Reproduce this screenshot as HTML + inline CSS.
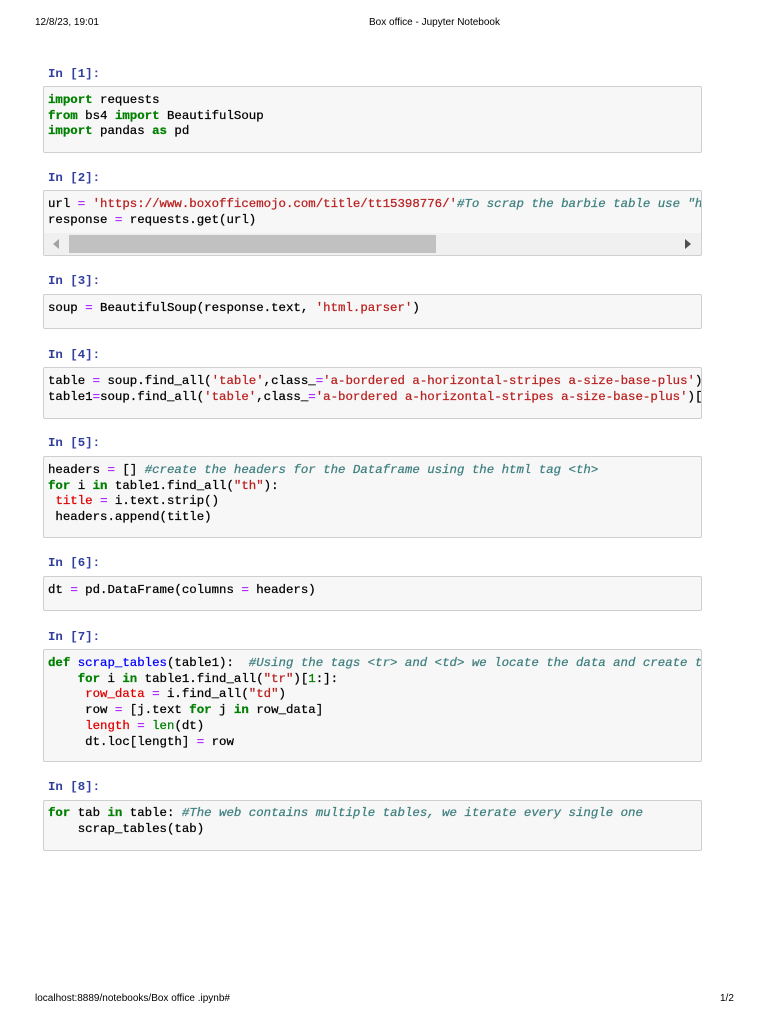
<!DOCTYPE html>
<html><head><meta charset="utf-8"><style>
body{margin:0;width:768px;height:1024px;background:#fff;position:relative;overflow:hidden;font-family:"Liberation Sans",sans-serif}
.hd{position:absolute;font-size:10px;color:#000}
.lbl{position:absolute;left:48px;font-family:"Liberation Mono",monospace;font-size:12.4px;color:#303F9F;font-weight:bold}
.box{position:absolute;left:43px;width:657px;border:1px solid #cfcfcf;background:#f7f7f7;overflow:hidden;border-radius:2px}
pre{margin:0;position:absolute;left:4px;font-family:"Liberation Mono",monospace;font-size:12.4px;line-height:15.7px;color:#000;white-space:pre;-webkit-text-stroke:0.25px currentColor}
.k{color:#008000;font-weight:bold}.s{color:#BA2121}.c{color:#408080;font-style:italic}.o{color:#AA22FF}.r{color:#e00000}.f{color:#0000FF}.n{color:#008000}.b{color:#008000}
</style></head><body>
<div class="hd" style="left:35px;top:17px">12/8/23, 19:01</div>
<div class="hd" style="left:369px;top:17px">Box office - Jupyter Notebook</div>
<div class="hd" style="left:35px;top:993px">localhost:8889/notebooks/Box office .ipynb#</div>
<div class="hd" style="left:720px;top:993px">1/2</div>

<div class="lbl" style="top:67px">In [1]:</div>
<div class="box" style="top:86px;height:65px"><pre style="top:6px"><span class="k">import</span> requests
<span class="k">from</span> bs4 <span class="k">import</span> BeautifulSoup
<span class="k">import</span> pandas <span class="k">as</span> pd</pre></div>

<div class="lbl" style="top:171px">In [2]:</div>
<div class="box" style="top:190px;height:64px"><pre style="top:6px">url <span class="o">=</span> <span class="s">'https://www.boxofficemojo.com/title/tt15398776/'</span><span class="c">#To scrap the barbie table use "h</span>
response <span class="o">=</span> requests.get(url)</pre>
<div style="position:absolute;left:0;top:42px;width:657px;height:22px;background:#f0f0f0"></div>
<div style="position:absolute;left:25px;top:44px;width:367px;height:18px;background:#c1c1c1"></div>
<div style="position:absolute;left:9px;top:48px;width:0;height:0;border-top:5px solid transparent;border-bottom:5px solid transparent;border-right:6px solid #a3a3a3"></div>
<div style="position:absolute;left:641px;top:48px;width:0;height:0;border-top:5px solid transparent;border-bottom:5px solid transparent;border-left:6px solid #505050"></div>
</div>

<div class="lbl" style="top:274px">In [3]:</div>
<div class="box" style="top:294px;height:33px"><pre style="top:6px">soup <span class="o">=</span> BeautifulSoup(response.text, <span class="s">'html.parser'</span>)</pre></div>

<div class="lbl" style="top:348px">In [4]:</div>
<div class="box" style="top:367px;height:50px"><pre style="top:6px">table <span class="o">=</span> soup.find_all(<span class="s">'table'</span>,class_<span class="o">=</span><span class="s">'a-bordered a-horizontal-stripes a-size-base-plus'</span>)
table1<span class="o">=</span>soup.find_all(<span class="s">'table'</span>,class_<span class="o">=</span><span class="s">'a-bordered a-horizontal-stripes a-size-base-plus'</span>)[</pre></div>

<div class="lbl" style="top:436px">In [5]:</div>
<div class="box" style="top:456px;height:80px"><pre style="top:6px">headers <span class="o">=</span> [] <span class="c">#create the headers for the Dataframe using the html tag &lt;th&gt;</span>
<span class="k">for</span> i <span class="k">in</span> table1.find_all(<span class="s">"th"</span>):
 <span class="r">title</span> <span class="o">=</span> i.text.strip()
 headers.append(title)</pre></div>

<div class="lbl" style="top:556px">In [6]:</div>
<div class="box" style="top:576px;height:33px"><pre style="top:6px">dt <span class="o">=</span> pd.DataFrame(columns <span class="o">=</span> headers)</pre></div>

<div class="lbl" style="top:630px">In [7]:</div>
<div class="box" style="top:649px;height:111px"><pre style="top:6px"><span class="k">def</span> <span class="f">scrap_tables</span>(table1):  <span class="c">#Using the tags &lt;tr&gt; and &lt;td&gt; we locate the data and create t</span>
    <span class="k">for</span> i <span class="k">in</span> table1.find_all(<span class="s">"tr"</span>)[<span class="n">1</span>:]:
     <span class="r">row_data</span> <span class="o">=</span> i.find_all(<span class="s">"td"</span>)
     row <span class="o">=</span> [j.text <span class="k">for</span> j <span class="k">in</span> row_data]
     <span class="r">length</span> <span class="o">=</span> <span class="b">len</span>(dt)
     dt.loc[length] <span class="o">=</span> row</pre></div>

<div class="lbl" style="top:780px">In [8]:</div>
<div class="box" style="top:800px;height:49px"><pre style="top:5px"><span class="k">for</span> tab <span class="k">in</span> table: <span class="c">#The web contains multiple tables, we iterate every single one</span>
    scrap_tables(tab)</pre></div>
</body></html>
